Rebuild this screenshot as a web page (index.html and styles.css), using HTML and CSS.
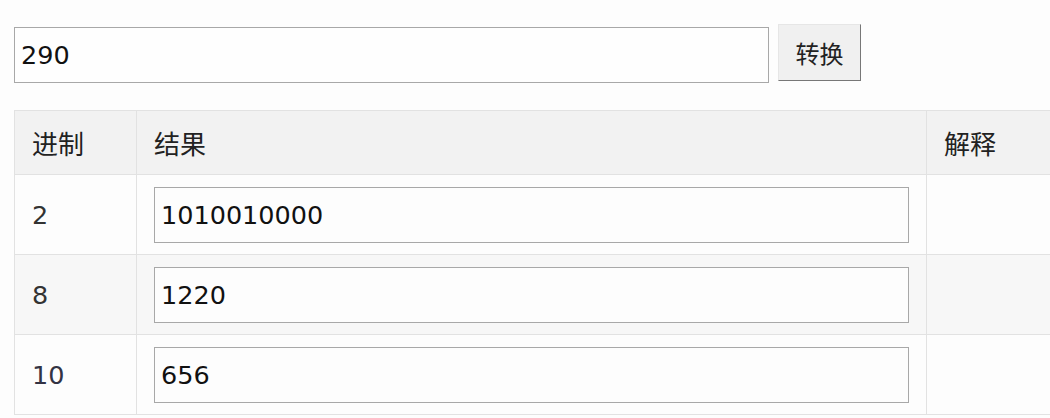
FILE: index.html
```html
<!DOCTYPE html>
<html lang="zh-CN">
<head>
    <meta charset="UTF-8">
    <title>进制转换</title>
    <link rel="stylesheet" href="styles.css">
</head>
<body>
    <div class="page">
        <div class="bar">
            <input class="num" type="text" value="290">
            <input class="go" type="button" value="转换">
        </div>

        <table class="grid">
            <colgroup>
                <col class="c-base">
                <col class="c-res">
                <col class="c-note">
            </colgroup>
            <tr>
                <th>进制</th>
                <th>结果</th>
                <th>解释</th>
            </tr>
            <tr>
                <td>2</td>
                <td><input class="num" type="text" value="1010010000"></td>
                <td></td>
            </tr>
            <tr class="alt">
                <td>8</td>
                <td><input class="num" type="text" value="1220"></td>
                <td></td>
            </tr>
            <tr>
                <td class="blue">10</td>
                <td><input class="num" type="text" value="656"></td>
                <td></td>
            </tr>
        </table>
    </div>
</body>
</html>
```

FILE: styles.css
```css
html, body{
    margin: 0;
    overflow: hidden;
    background: #fdfdfd;
}
.page{
    padding: 24px 0 0 14px;
    font-family: "DejaVu Sans", "Noto Sans CJK SC", sans-serif;
    color: #333;
}
.bar{
    display: flex;
    align-items: flex-start;
    gap: 9px;
}
.num{
    box-sizing: border-box;
    width: 755px;
    height: 56px;
    margin: 0;
    padding: 0 6px;
    border: 1px solid #a8a8a8;
    background: #fefefe;
    font-family: "DejaVu Sans", sans-serif;
    font-size: 25.5px;
    color: #111;
    outline: none;
}
.bar .num{
    margin-top: 3px;
}
.go{
    box-sizing: border-box;
    width: 83px;
    height: 57px;
    margin: 0;
    padding: 0;
    background: #f0f0f0;
    border: 1px solid #e6e6e6;
    border-right-color: #777;
    border-bottom-color: #777;
    font-family: "Noto Sans CJK SC", sans-serif;
    font-size: 24px;
    color: #222;
}
.grid{
    margin-top: 27px;
    width: 100%;
    table-layout: fixed;
    border-collapse: collapse;
}
.c-base{
    width: 122px;
}
.c-res{
    width: 790px;
}
.grid th, .grid td{
    border: 1px solid #e2e2e2;
    text-align: left;
    font-size: 25.5px;
}
.grid th:last-child, .grid td:last-child{
    border-right: none;
}
.grid th{
    height: 63px;
    padding: 0 17px;
    background: #f2f2f2;
    font-family: "Noto Sans CJK SC", sans-serif;
    font-size: 26px;
    font-weight: normal;
    color: #222;
}
.grid td{
    padding: 12px 17px 11px;
    background: #fdfdfd;
}
.grid .alt td{
    background: #f7f7f7;
}
.grid td .num{
    display: block;
    width: 100%;
    background: #fdfdfd;
}
.blue{
    color: #334;
}
```
